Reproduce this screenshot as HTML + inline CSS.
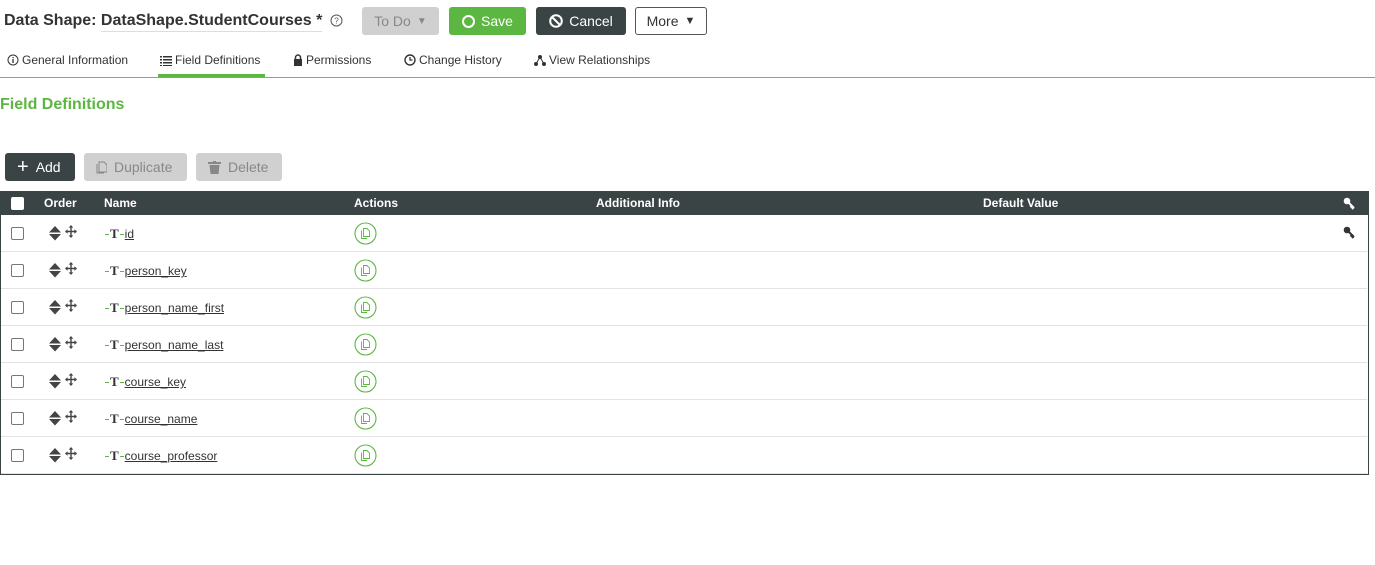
<!DOCTYPE html>
<html><head><meta charset="utf-8"><style>
*{box-sizing:border-box;margin:0;padding:0}
body{width:1375px;height:565px;background:#fff;font-family:"Liberation Sans",Arial,sans-serif;color:#333;position:relative;overflow:hidden}
.a{position:absolute}
.btn{position:absolute;top:7px;height:28px;border-radius:3px;font-size:14px;display:flex;align-items:center;justify-content:center;gap:6px}
.tab{position:absolute;top:53px;font-size:12px;color:#333;display:flex;align-items:center;gap:3px}
.tb{position:absolute;top:153px;height:28px;border-radius:3px;font-size:14px;display:flex;align-items:center;gap:7px;padding-left:12px}
.hd{position:absolute;top:196px;font-size:12px;font-weight:bold;color:#fff}
.row{position:absolute;left:1px;width:1366px;height:37px;border-bottom:1px solid #e3e3e3}
.cb{position:absolute;left:10px;top:12px;width:13px;height:13px;border:1px solid #777;border-radius:2px;background:#fff}
.name{position:absolute;left:104px;top:11px;font-size:12px;color:#333;display:flex;align-items:center;gap:1px}
.name u{text-decoration:underline}
.act{position:absolute;left:353px;top:7px}
.ord{position:absolute;left:48px;top:10px}
</style></head><body>
<div class="a" style="left:4px;top:12px;font-size:16px;font-weight:bold;color:#333">Data Shape: <span style="border-bottom:1px solid #ddd;padding-bottom:2px">DataShape.StudentCourses *</span></div>
<svg class="a" style="left:330px;top:14px" width="13" height="13" viewBox="0 0 13 13"><circle cx="6.5" cy="6.5" r="5.5" fill="none" stroke="#555" stroke-width="1"/><text x="6.5" y="9.5" font-size="8" text-anchor="middle" fill="#555" font-family="Liberation Sans">?</text></svg>
<div class="btn" style="left:362px;width:77px;background:#d0d0d0;color:#888">To Do <span style="font-size:10px">▼</span></div>
<div class="btn" style="left:449px;width:77px;background:#5bb741;color:#fff"><span style="width:13px;height:13px;border:2px solid #fff;border-radius:50%"></span>Save</div>
<div class="btn" style="left:536px;width:90px;background:#3b4445;color:#fff"><svg width="14" height="14" viewBox="0 0 14 14"><circle cx="7" cy="7" r="5.8" fill="none" stroke="#fff" stroke-width="2"/><line x1="3" y1="3" x2="11" y2="11" stroke="#fff" stroke-width="2"/></svg>Cancel</div>
<div class="btn" style="left:635px;width:72px;border:1px solid #555;color:#333;background:#fff">More <span style="font-size:11px">▼</span></div>

<div class="tab" style="left:7px"><svg width="12" height="12"><circle cx="6" cy="6" r="5" fill="none" stroke="#333"/><rect x="5.4" y="5" width="1.3" height="4" fill="#333"/><rect x="5.4" y="3" width="1.3" height="1.2" fill="#333"/></svg>General Information</div>
<div class="tab" style="left:160px"><svg width="12" height="11"><g fill="#333"><rect x="0" y="1" width="2" height="1.5"/><rect x="3" y="1" width="9" height="1.5"/><rect x="0" y="4" width="2" height="1.5"/><rect x="3" y="4" width="9" height="1.5"/><rect x="0" y="7" width="2" height="1.5"/><rect x="3" y="7" width="9" height="1.5"/><rect x="0" y="10" width="2" height="1"/><rect x="3" y="10" width="9" height="1"/></g></svg>Field Definitions</div>
<div class="a" style="left:158px;top:74px;width:107px;height:3px;background:#5bb741"></div>
<div class="tab" style="left:293px"><svg width="10" height="12"><rect x="1" y="5" width="8" height="7" fill="#333"/><path d="M2.5 5V3.5a2.5 2.5 0 0 1 5 0V5" fill="none" stroke="#333" stroke-width="1.5"/></svg>Permissions</div>
<div class="tab" style="left:404px"><svg width="12" height="12"><circle cx="6" cy="6" r="5" fill="none" stroke="#333" stroke-width="1.4"/><path d="M6 3v3h2.5" fill="none" stroke="#333" stroke-width="1.3"/></svg>Change History</div>
<div class="tab" style="left:534px"><svg width="12" height="12"><circle cx="6" cy="3" r="2" fill="#333"/><circle cx="2" cy="10" r="2" fill="#333"/><circle cx="10" cy="10" r="2" fill="#333"/><path d="M6 3L2 10M6 3l4 7" stroke="#333"/></svg>View Relationships</div>
<div class="a" style="left:0;top:77px;width:1375px;height:1px;background:#999"></div>

<div class="a" style="left:0;top:96px;font-size:16px;font-weight:bold;color:#5bb741">Field Definitions</div>

<div class="tb" style="left:5px;width:70px;background:#3b4445;color:#fff"><span style="font-size:20px;font-weight:300;line-height:1">+</span>Add</div>
<div class="tb" style="left:84px;width:103px;background:#d0d0d0;color:#888"><svg width="11" height="13"><path d="M3 1h5l3 3v7H3z M1 3v9h7" fill="none" stroke="#888"/></svg>Duplicate</div>
<div class="tb" style="left:196px;width:86px;background:#d0d0d0;color:#888"><svg width="13" height="13"><rect x="0" y="1" width="13" height="2" fill="#888"/><rect x="5" y="0" width="3" height="2" fill="#888"/><path d="M1.5 4h10l-1 9h-8z" fill="#888"/></svg>Delete</div>

<div class="a" style="left:0;top:191px;width:1369px;height:284px;border:1px solid #3b4445;border-top:0"></div>
<div class="a" style="left:0;top:191px;width:1369px;height:24px;background:#3b4445"></div>
<div class="a" style="left:11px;top:197px;width:13px;height:13px;background:#fff;border-radius:2px"></div>
<div class="hd" style="left:44px">Order</div>
<div class="hd" style="left:104px">Name</div>
<div class="hd" style="left:354px">Actions</div>
<div class="hd" style="left:596px">Additional Info</div>
<div class="hd" style="left:983px">Default Value</div>
<svg class="a" style="left:1343px;top:197px" width="13" height="13" viewBox="0 0 13 13"><circle cx="4" cy="4" r="3.3" fill="#fff"/><path d="M5 5l6 6M9 9l-1.5 1.5M10.5 10.5l-1.5 1.5" stroke="#fff" stroke-width="2"/></svg>

<div id="rows"></div>
<script>
var names=["id","person_key","person_name_first","person_name_last","course_key","course_name","course_professor"];
var h="";
names.forEach(function(n,i){
var top=215+i*37;
h+='<div class="row" style="top:'+top+'px">'+
'<div class="cb"></div>'+
'<svg class="ord" width="30" height="17" viewBox="0 0 30 17"><path d="M0 7.5L6 1 12 7.5z M0 9L6 15.5 12 9z" fill="#444"/><path d="M22 1v11M16.5 6.5h11" stroke="#444" stroke-width="1.4"/><path d="M22 0l-2.3 2.6h4.6z M22 13l-2.3-2.6h4.6z M16 6.5l2.6-2.3v4.6z M28 6.5l-2.6-2.3v4.6z" fill="#444"/></svg>'+
'<div class="name"><span style="font-family:\'Liberation Serif\',serif;font-weight:bold;font-size:13px;color:#333;position:relative;padding:0 4px"><span style="position:absolute;left:0;right:0;top:8px;height:1px;background:#5bb741"></span><span style="position:relative;background:#fff;padding:0 1px">T</span></span><u>'+n+'</u></div>'+
'<svg class="act" width="23" height="23" viewBox="0 0 23 23"><circle cx="11.5" cy="11.5" r="10.5" fill="none" stroke="#5bb741" stroke-width="1.1"/><path d="M9.5 6.5h3.5l2.5 2.5v5.5H9.5z M7.5 8.5v8h5.5" fill="none" stroke="#5bb741" stroke-width="0.9"/></svg>'+
(i==0?'<svg class="a" style="left:1342px;top:11px" width="13" height="13" viewBox="0 0 13 13"><circle cx="4" cy="4" r="3.3" fill="#333"/><path d="M5 5l6 6M9 9l-1.5 1.5M10.5 10.5l-1.5 1.5" stroke="#333" stroke-width="2"/></svg>':'')+
'</div>';
});
document.getElementById("rows").innerHTML=h;
</script>
</body></html>
